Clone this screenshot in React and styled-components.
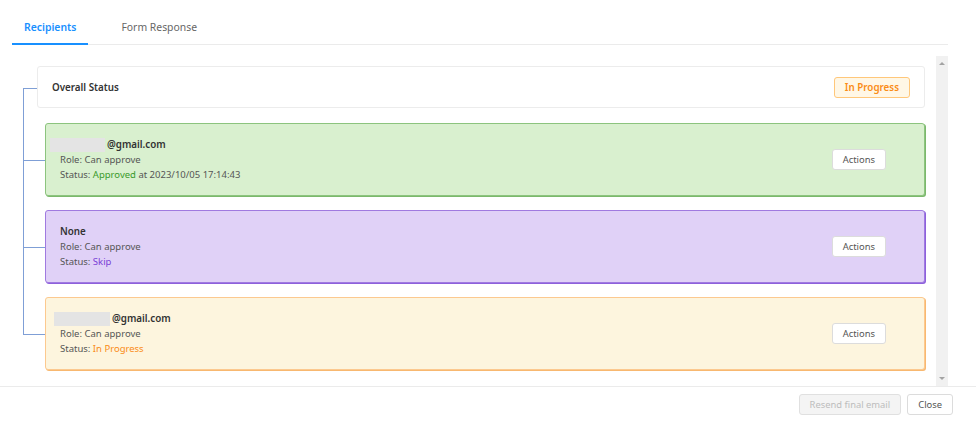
import styled, { createGlobalStyle } from "styled-components";

const GlobalStyle = createGlobalStyle`
  html, body {
    margin: 0;
    padding: 0;
    background: #ffffff;
    font-family: "Noto Sans", "Open Sans", "Liberation Sans", sans-serif;
  }
`;

const tones = {
  approved: { bg: "#d9f0cf", border: "#8cc47e", shadow: "#7bb86c", status: "#3a9a2c" },
  skip: { bg: "#e0d1f7", border: "#a07ae0", shadow: "#8d60dc", status: "#7a3fd6" },
  progress: { bg: "#fdf5de", border: "#fcc98f", shadow: "#f8b870", status: "#fa8c16" },
};

const Page = styled.div`
  width: 976px;
  height: 441px;
  display: flex;
  flex-direction: column;
`;

const TabBar = styled.div`
  display: flex;
  gap: 21px;
  margin: 0 28px 0 12px;
  height: 45px;
  border-bottom: 1px solid #ebebeb;
  box-sizing: border-box;
`;

const Tab = styled.div`
  padding: 0 12px 9px;
  display: flex;
  align-items: flex-end;
  font-size: 10.4px;
  font-weight: ${(props) => (props.$active ? 600 : 400)};
  color: ${(props) => (props.$active ? "#1890ff" : "#666666")};
  border-bottom: 2px solid ${(props) => (props.$active ? "#1890ff" : "transparent")};
  margin-bottom: -1px;
`;

const Body = styled.div`
  display: flex;
  margin: 11px 28px 0 12px;
  height: 330px;
`;

const Tree = styled.div`
  flex: 1;
  padding: 10px 11px 0 11px;
  display: flex;
  flex-direction: column;
  gap: 14px;
`;

const Node = styled.div`
  position: relative;
  padding-left: ${(props) => (props.$root ? "14px" : "22px")};

  &::before {
    content: "";
    position: absolute;
    left: 0;
    top: 50%;
    width: ${(props) => (props.$root ? "14px" : "22px")};
    border-top: 1.5px solid #7f9fd6;
  }

  &::after {
    content: "";
    position: absolute;
    left: 0;
    border-left: 1.5px solid #7f9fd6;
    top: ${(props) => (props.$root ? "50%" : "-14px")};
    bottom: ${(props) => (props.$last ? "50%" : props.$root ? "-15px" : "0")};
  }
`;

const StatusCard = styled.div`
  height: 40px;
  border: 1px solid #ececec;
  border-radius: 3px;
  display: flex;
  align-items: center;
  justify-content: space-between;
  padding: 0 14px 0 14px;
  margin-bottom: 1px;
`;

const StatusTitle = styled.div`
  font-size: 9.8px;
  font-weight: 600;
  color: #333333;
`;

const Badge = styled.div`
  font-size: 9.8px;
  font-weight: 600;
  color: #fa8c16;
  background: #fff7e6;
  border: 1px solid #ffc77a;
  border-radius: 3px;
  padding: 0 10px;
  height: 19px;
  line-height: 19px;
`;

const Card = styled.div`
  box-sizing: border-box;
  height: 73px;
  background: ${(props) => tones[props.$tone].bg};
  border: 1px solid ${(props) => tones[props.$tone].border};
  box-shadow: 1px 1px 0 ${(props) => tones[props.$tone].shadow};
  border-radius: 3px;
  display: flex;
  align-items: center;
  justify-content: space-between;
  padding: 0 38px 0 14px;
`;

const Info = styled.div`
  display: flex;
  flex-direction: column;
  font-size: 9.5px;
  line-height: 15px;
  color: #555555;
`;

const Name = styled.div`
  display: flex;
  align-items: center;
  font-weight: 600;
  color: #333333;
  font-size: 9.8px;
`;

const Hidden = styled.span`
  display: inline-block;
  width: ${(props) => props.$w}px;
  height: 14px;
  margin-left: ${(props) => props.$shift}px;
  margin-right: 2px;
  background: #e4e4e4;
`;

const StatusText = styled.span`
  color: ${(props) => tones[props.$tone].status};
`;

const Button = styled.button`
  font-family: inherit;
  font-size: 9.4px;
  height: 21px;
  padding: 0 ${(props) => props.$pad || 10}px;
  border-radius: 3px;
  border: 1px solid ${(props) => (props.disabled ? "#e0e0e0" : "#dcdcdc")};
  background: ${(props) => (props.disabled ? "#f4f4f4" : "#ffffff")};
  color: ${(props) => (props.disabled ? "#bdbdbd" : "#555555")};
  cursor: ${(props) => (props.disabled ? "not-allowed" : "pointer")};
`;

const ScrollBar = styled.div`
  width: 12px;
  background: #f1f1f1;
  display: flex;
  flex-direction: column;
  justify-content: space-between;
  align-items: center;
  padding: 6px 0;
  box-sizing: border-box;
`;

const Arrow = styled.div`
  width: 0;
  height: 0;
  border-left: 3px solid transparent;
  border-right: 3px solid transparent;
  ${(props) =>
    props.$down
      ? "border-top: 3px solid #a3a3a3;"
      : "border-bottom: 3px solid #a3a3a3;"}
`;

const Footer = styled.div`
  border-top: 1px solid #ebebeb;
  display: flex;
  justify-content: flex-end;
  gap: 6px;
  padding: 7px 23px 0 0;
`;

const recipients = [
  { tone: "approved", hidden: 55, shift: -10, email: "@gmail.com", status: "Approved", extra: " at 2023/10/05 17:14:43" },
  { tone: "skip", name: "None", status: "Skip" },
  { tone: "progress", hidden: 56, shift: -6, email: "@gmail.com", status: "In Progress" },
];

export default function App() {
  return (
    <Page>
      <GlobalStyle />
      <TabBar>
        <Tab $active>Recipients</Tab>
        <Tab>Form Response</Tab>
      </TabBar>
      <Body>
        <Tree>
          <Node $root>
            <StatusCard>
              <StatusTitle>Overall Status</StatusTitle>
              <Badge>In Progress</Badge>
            </StatusCard>
          </Node>
          {recipients.map((r, i) => (
            <Node key={i} $last={i === recipients.length - 1}>
              <Card $tone={r.tone}>
                <Info>
                  <Name>
                    {r.name ? (
                      r.name
                    ) : (
                      <>
                        <Hidden $w={r.hidden} $shift={r.shift} />
                        {r.email}
                      </>
                    )}
                  </Name>
                  <div>Role: Can approve</div>
                  <div>
                    Status: <StatusText $tone={r.tone}>{r.status}</StatusText>
                    {r.extra}
                  </div>
                </Info>
                <Button>Actions</Button>
              </Card>
            </Node>
          ))}
        </Tree>
        <ScrollBar>
          <Arrow />
          <Arrow $down />
        </ScrollBar>
      </Body>
      <Footer>
        <Button disabled $pad={10}>Resend final email</Button>
        <Button $pad={10}>Close</Button>
      </Footer>
    </Page>
  );
}
